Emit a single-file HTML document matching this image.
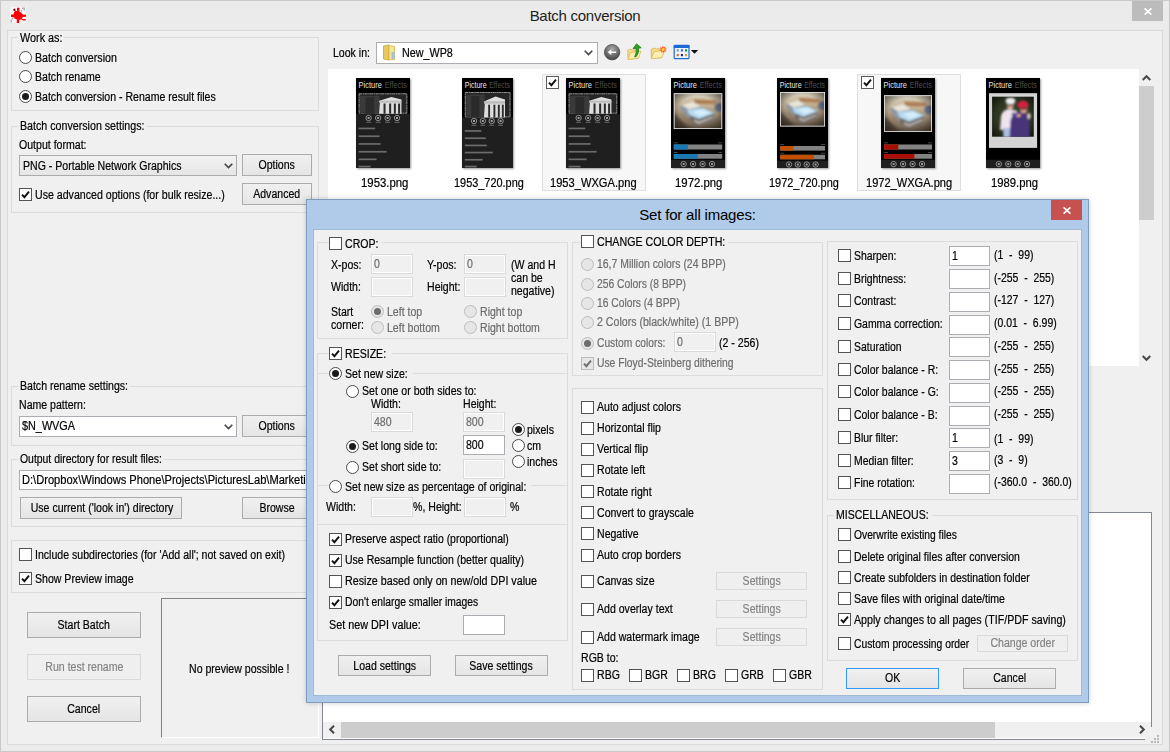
<!DOCTYPE html><html><head><meta charset="utf-8"><title>Batch conversion</title><style>
*{box-sizing:border-box;margin:0;padding:0}
html,body{width:1170px;height:752px;overflow:hidden;background:#ebebeb}
body{font-family:"Liberation Sans",sans-serif;font-size:11px;color:#000;position:relative}
.a{position:absolute}
.t{position:absolute;white-space:nowrap;line-height:13px;height:13px;font-size:12px;transform-origin:0 0;-webkit-text-stroke:0.2px currentColor}
.g{color:#6d6d6d}
.gb{position:absolute;border:1px solid #dcdcdc}
.lg{position:absolute;background:#f0f0f0;height:13px}

.cb{position:absolute;width:13px;height:13px;border:1px solid #545454;background:#fff}
.cb.d{border-color:#bcbcbc;background:#e6e6e6}

.rb{position:absolute;width:13px;height:13px;border:1px solid #4a4a4a;background:#fff;border-radius:50%}
.rb.d{border-color:#bcbcbc;background:#e6e6e6}
.rb.s::after{content:"";position:absolute;left:2px;top:2px;width:7px;height:7px;border-radius:50%;background:#1a1a1a}
.rb.d.s::after{background:#6d6d6d}
.btn{position:absolute;border:1px solid #acacac;background:linear-gradient(#f0f0f0,#e5e5e5);text-align:center;font-size:12px;white-space:nowrap}
.btn span{display:inline-block;transform:scaleX(0.88);-webkit-text-stroke:0.2px currentColor}
.btn.d{border-color:#d9d9d9;background:#efefef;color:#838383}
.btn.def{border-color:#3399ff}
.inp{position:absolute;border:1px solid #abadb3;background:#fff}
.inp.d{border:1px solid #dadada;background:#f0f0f0;box-shadow:inset 0 0 0 1px #fff}
.chk{position:absolute;left:1px;top:1px;width:9px;height:9px}
</style></head><body>
<div class="a" style="left:0;top:0;width:1170px;height:752px;border:1px solid #c9c9c9;background:#ebebeb"></div>
<div class="a" style="left:7px;top:30px;width:1156px;height:715px;border:1px solid #dadada;background:#f0f0f0"></div>
<div class="a" style="left:0;top:6px;width:1170px;text-align:center;font-size:15px;line-height:20px;color:#1e1e1e;letter-spacing:-0.27px">Batch conversion</div>
<div class="a" style="left:1132px;top:1px;width:31px;height:20px;background:#bcbcbc"></div>
<svg class="a" style="left:1144px;top:8px" width="8" height="7" viewBox="0 0 8 7"><path d="M0.6 0.3 L7.4 6.7 M7.4 0.3 L0.6 6.7" stroke="#fff" stroke-width="1.6" fill="none"/></svg>
<svg class="a" style="left:10px;top:7px" width="16" height="16" viewBox="0 0 16 16"><rect width="16" height="16" fill="#f6f6f6"/><path d="M12 0.5h3v3h-1.5v-1.5h-1.5zM0.5 12.5h1.5v3h-1.5zM11 3h1v2h-1zM2 10.5h3v1h-2v1h-1z" fill="#b5b5b5"/><path d="M7 0.8 L9.5 0.8 L9.3 4.4 L11.2 5.6 L12.6 7.6 L16 7.8 L16 9.7 L12.6 10 L12 12 L15.9 12.1 L15.6 13.6 L13 13.6 L11.6 12.4 L9.2 12.8 L9.2 16 L6.7 16 L6.9 12.6 L4.6 11.4 L4 10 L1 10 L1 7.6 L3.6 7.4 L4 5.2 L5 4.6 L3.2 3 L4.2 1.4 L5.4 2.6 L5.6 4.3 L7 4 Z" fill="#fb0007"/><path d="M3.2 3 L4.2 1.4 L5.3 2.6 L5.2 4.4 Z" fill="#7a0008"/></svg>
<div class="gb" style="left:11px;top:37px;width:308px;height:74px"></div>
<div class="lg" style="left:18px;top:31px;width:46px"></div>
<div class="t " style="left:20px;top:32px;transform:scaleX(0.9019);">Work as:</div>
<div class="rb" style="left:19px;top:51px"></div>
<div class="t " style="left:35px;top:52px;transform:scaleX(0.8896);">Batch conversion</div>
<div class="rb" style="left:19px;top:70px"></div>
<div class="t " style="left:35px;top:71px;transform:scaleX(0.88);">Batch rename</div>
<div class="rb s" style="left:19px;top:90px"></div>
<div class="t " style="left:35px;top:91px;transform:scaleX(0.88);">Batch conversion - Rename result files</div>
<div class="gb" style="left:11px;top:126px;width:308px;height:87px"></div>
<div class="lg" style="left:18px;top:119px;width:129px"></div>
<div class="t " style="left:20px;top:120px;transform:scaleX(0.8888);">Batch conversion settings:</div>
<div class="t " style="left:19px;top:139px;transform:scaleX(0.88);">Output format:</div>
<div class="inp" style="left:19px;top:155px;width:218px;height:21px;border-color:#acacac;background:linear-gradient(#f2f2f2,#e6e6e6)"></div>
<div class="t " style="left:23px;top:160px;transform:scaleX(0.88);">PNG - Portable Network Graphics</div>
<svg class="a" style="left:224px;top:163px" width="9" height="6" viewBox="0 0 9 6"><path d="M0.7 0.7 L4.5 4.5 L8.3 0.7" fill="none" stroke="#444" stroke-width="1.6"/></svg>
<div class="btn " style="left:242px;top:154px;width:70px;height:22px;line-height:20px;"><span>Options</span></div>
<div class="cb" style="left:19px;top:188px"><svg class="chk" viewBox="0 0 9 9"><path d="M1 4.6 L3.4 7.2 L8 1.6" fill="none" stroke="#111" stroke-width="1.9"/></svg></div>
<div class="t " style="left:35px;top:189px;transform:scaleX(0.8837);">Use advanced options (for bulk resize...)</div>
<div class="btn " style="left:242px;top:183px;width:70px;height:22px;line-height:20px;"><span>Advanced</span></div>
<div class="gb" style="left:11px;top:386px;width:308px;height:60px"></div>
<div class="lg" style="left:18px;top:379px;width:112px"></div>
<div class="t " style="left:20px;top:380px;transform:scaleX(0.88);">Batch rename settings:</div>
<div class="t " style="left:19px;top:399px;transform:scaleX(0.88);">Name pattern:</div>
<div class="inp" style="left:19px;top:416px;width:218px;height:21px;border-color:#abadb3;background:#fff"></div>
<div class="t " style="left:22px;top:420px;transform:scaleX(0.9031);">$N_WVGA</div>
<svg class="a" style="left:224px;top:424px" width="9" height="6" viewBox="0 0 9 6"><path d="M0.7 0.7 L4.5 4.5 L8.3 0.7" fill="none" stroke="#444" stroke-width="1.6"/></svg>
<div class="btn " style="left:242px;top:415px;width:70px;height:22px;line-height:20px;"><span>Options</span></div>
<div class="gb" style="left:11px;top:459px;width:308px;height:68px"></div>
<div class="lg" style="left:18px;top:452px;width:145px"></div>
<div class="t " style="left:20px;top:453px;transform:scaleX(0.8678);">Output directory for result files:</div>
<div class="inp" style="left:19px;top:470px;width:294px;height:20px"></div>
<div class="t " style="left:22px;top:474px;transform:scaleX(0.925);">D:\Dropbox\Windows Phone\Projects\PicturesLab\Marketing</div>
<div class="btn " style="left:20px;top:497px;width:162px;height:22px;line-height:20px;"><span>Use current ('look in') directory</span></div>
<div class="btn " style="left:242px;top:497px;width:70px;height:22px;line-height:20px;"><span>Browse</span></div>
<div class="gb" style="left:11px;top:540px;width:308px;height:53px"></div>
<div class="cb" style="left:19px;top:548px"></div>
<div class="t " style="left:35px;top:549px;transform:scaleX(0.88);">Include subdirectories (for 'Add all'; not saved on exit)</div>
<div class="cb" style="left:19px;top:572px"><svg class="chk" viewBox="0 0 9 9"><path d="M1 4.6 L3.4 7.2 L8 1.6" fill="none" stroke="#111" stroke-width="1.9"/></svg></div>
<div class="t " style="left:35px;top:573px;transform:scaleX(0.88);">Show Preview image</div>
<div class="btn " style="left:27px;top:612px;width:114px;height:26px;line-height:24px;"><span>Start Batch</span></div>
<div class="btn d" style="left:27px;top:654px;width:114px;height:26px;line-height:24px;"><span>Run test rename</span></div>
<div class="btn " style="left:27px;top:696px;width:114px;height:26px;line-height:24px;"><span>Cancel</span></div>
<div class="a" style="left:161px;top:598px;width:158px;height:140px;border:1px solid #828282;border-right-color:#fff;border-bottom-color:#fff;background:#f0f0f0"></div>
<div class="t " style="left:189px;top:663px;transform:scaleX(0.88);">No preview possible !</div>
<div class="t " style="left:333px;top:47px;transform:scaleX(0.88);">Look in:</div>
<div class="inp" style="left:376px;top:42px;width:222px;height:22px;border-color:#abadb3;background:#fff"></div>
<div class="t " style="left:402px;top:47px;transform:scaleX(0.8961);">New_WP8</div>
<svg class="a" style="left:584px;top:50px" width="9" height="6" viewBox="0 0 9 6"><path d="M0.7 0.7 L4.5 4.5 L8.3 0.7" fill="none" stroke="#444" stroke-width="1.6"/></svg>
<svg class="a" style="left:382px;top:44px" width="16" height="17" viewBox="0 0 16 17"><path d="M1.5 2 L7 1 L7 16 L1.5 15 Z" fill="#e8c860" stroke="#c9a230" stroke-width="0.8"/><path d="M7 1.5 L12.5 2.5 L12.5 15.5 L7 16 Z" fill="#f7e59a" stroke="#d4b24a" stroke-width="0.8"/><rect x="9.5" y="8" width="3" height="7" fill="#9ec3e6"/></svg>
<svg class="a" style="left:603px;top:44px" width="18" height="17" viewBox="0 0 18 17"><defs><radialGradient id="bk" cx="50%" cy="30%" r="75%"><stop offset="0" stop-color="#a9a9a9"/><stop offset="0.55" stop-color="#6f6f6f"/><stop offset="1" stop-color="#3c3c3c"/></radialGradient></defs><circle cx="9.1" cy="8.2" r="7.7" fill="url(#bk)" stroke="#4d4d4d" stroke-width="0.8"/><path d="M4.7 8.2 L8.3 5.3 L8.3 7.4 L13.2 7.4 L13.2 9 L8.3 9 L8.3 11.1 Z" fill="#fff"/></svg>
<svg class="a" style="left:626px;top:43px" width="17" height="18" viewBox="0 0 17 18"><path d="M2 16.4 L1.8 7.2 L4.5 6 L6.5 7 L12 6.6 L12.2 15.2 Z" fill="#f3dc8c" stroke="#d8b24a" stroke-width="0.8"/><path d="M2 16.5 L4.4 9.6 L15 8.2 L12.4 15.2 Z" fill="#fbeeb4" stroke="#dcb957" stroke-width="0.8"/><path d="M8.6 13.8 Q10.8 10 10.2 5.4 L7 5.6 L10.6 0.8 L15.2 4.8 L12.6 5.2 Q13.2 10.4 9.8 14 Z" fill="#2fa127" stroke="#14780f" stroke-width="0.7"/></svg>
<svg class="a" style="left:650px;top:43px" width="18" height="18" viewBox="0 0 18 18"><path d="M1.4 15.6 L1.2 6.4 L4 5 L6 6 L11.5 5.6 L11.8 14.6 Z" fill="#f3dc8c" stroke="#d8b24a" stroke-width="0.8"/><path d="M1.4 15.8 L3.8 8.6 L14.6 7.4 L12 14.6 Z" fill="#fbeeb4" stroke="#dcb957" stroke-width="0.8"/><path d="M12.9 2.4 L13.7 4.6 L15.6 3.3 L15 5.5 L17.2 5.8 L15.3 7 L16.6 8.8 L14.4 8.3 L14 10.5 L12.8 8.6 L11 9.9 L11.4 7.7 L9.2 7.4 L11 6.1 L9.8 4.2 L12 4.8 Z" fill="#ff5a1e"/><circle cx="13.1" cy="6.5" r="1.5" fill="#ffd94a"/></svg>
<svg class="a" style="left:673px;top:44px" width="26" height="17" viewBox="0 0 26 17"><rect x="1.2" y="1.4" width="14.8" height="13.2" rx="0.8" fill="#eef3fa" stroke="#1c6ad6" stroke-width="1.2"/><rect x="0.8" y="1" width="15.6" height="3" fill="#1c6ad6"/><rect x="3.7" y="5.3" width="2.1" height="2.2" fill="#8a86c6"/><rect x="7.9" y="5.3" width="2.1" height="2.2" fill="#1f72d6"/><rect x="12" y="5.3" width="2.1" height="2.2" fill="#1e8a2e"/><rect x="3.7" y="10" width="2.1" height="2.2" fill="#e8603a"/><rect x="7.9" y="10" width="2.1" height="2.2" fill="#1a2a8a"/><rect x="12" y="10" width="2.1" height="2.2" fill="#d9a030"/><path d="M17.9 5.9 L25.2 5.9 L21.55 9.8 Z" fill="#111"/></svg>
<div class="a" style="left:328px;top:69px;width:811px;height:297px;background:#fff"></div>
<div class="a" style="left:1139px;top:69px;width:17px;height:297px;background:#f0f0f0"></div>
<div class="a" style="left:1139px;top:86px;width:15px;height:134px;background:#cdcdcd"></div>
<svg class="a" style="left:1142px;top:75px" width="9" height="6" viewBox="0 0 9 6"><path d="M0.7 5 L4.5 1.2 L8.3 5" fill="none" stroke="#4a4a4a" stroke-width="2.1"/></svg>
<svg class="a" style="left:1142px;top:355px" width="9" height="6" viewBox="0 0 9 6"><path d="M0.7 1 L4.5 4.8 L8.3 1" fill="none" stroke="#4a4a4a" stroke-width="2.1"/></svg>
<svg class="a" style="left:356px;top:78px;box-shadow:1px 1px 2px rgba(0,0,0,.4);font-family:'Liberation Sans',sans-serif" width="54" height="90" viewBox="0 0 54 90"><rect width="54" height="90" fill="#000"/><text x="2.6" y="9.8" font-size="9" fill="#e9e9e9" textLength="23.2" lengthAdjust="spacingAndGlyphs">Picture</text><text x="28.8" y="9.8" font-size="9" fill="#4e4e4e" textLength="22" lengthAdjust="spacingAndGlyphs">Effects</text><rect x="0" y="36" width="54" height="54" fill="#1f1f1f"/><rect x="2.6" y="15.3" width="48.7" height="20.4" fill="#262626"/><rect x="3.1" y="15.8" width="47.7" height="19.4" fill="none" stroke="#9d9d9d" stroke-width="0.9" stroke-dasharray="3 0.6 1.5 0.4"/><rect x="4.1" y="17.8" width="19.480000000000004" height="17.9" fill="#3a3a3a"/><rect x="9.418000000000001" y="19.3" width="8.766" height="16.4" fill="#2a2a2a"/><path d="M23.054000000000002 35.7 L24.054000000000002 22.439999999999998 L35.3751 18.972 L45.456 21.42 L45.456 35.7 Z" fill="#dedede"/><rect x="27.5344" y="25.5" width="2.01618" height="10.2" fill="#2b2b2b"/><rect x="33.1349" y="25.5" width="2.01618" height="10.2" fill="#2b2b2b"/><rect x="37.83932" y="25.5" width="2.01618" height="10.2" fill="#2b2b2b"/><rect x="42.0957" y="25.5" width="2.01618" height="10.2" fill="#2b2b2b"/><rect x="23.054000000000002" y="22.644" width="22.402" height="2.04" fill="#bdbdbd"/><circle cx="12.6" cy="40" r="2.7" fill="none" stroke="#b9b9b9" stroke-width="0.7"/><rect x="11.6" y="39" width="2" height="2" fill="#9d9d9d"/><circle cx="22.1" cy="40" r="2.7" fill="none" stroke="#b9b9b9" stroke-width="0.7"/><rect x="21.1" y="39" width="2" height="2" fill="#9d9d9d"/><circle cx="31.6" cy="40" r="2.7" fill="none" stroke="#b9b9b9" stroke-width="0.7"/><rect x="30.6" y="39" width="2" height="2" fill="#9d9d9d"/><circle cx="41" cy="40" r="2.7" fill="none" stroke="#b9b9b9" stroke-width="0.7"/><rect x="40" y="39" width="2" height="2" fill="#9d9d9d"/><rect x="10.1" y="43.8" width="5" height="0.8" fill="#7d7d7d"/><rect x="19.6" y="43.8" width="5" height="0.8" fill="#7d7d7d"/><rect x="29.1" y="43.8" width="5" height="0.8" fill="#7d7d7d"/><rect x="38.5" y="43.8" width="5" height="0.8" fill="#7d7d7d"/><rect x="2.6" y="49.6" width="16.6" height="1.7" fill="#6c6c6c"/><rect x="2.6" y="57.4" width="21" height="1.7" fill="#6c6c6c"/><rect x="2.6" y="65.1" width="22" height="1.7" fill="#6c6c6c"/><rect x="2.6" y="72.89999999999999" width="28" height="1.7" fill="#6c6c6c"/><rect x="2.6" y="80.5" width="18" height="1.7" fill="#6c6c6c"/><rect x="2.6" y="87.69999999999999" width="12" height="1.7" fill="#6c6c6c"/></svg>
<div class="t " style="left:360.6px;top:177px;transform:scaleX(0.9468);-webkit-text-stroke:0.2px #000;">1953.png</div>
<svg class="a" style="left:462px;top:78px;box-shadow:1px 1px 2px rgba(0,0,0,.4);font-family:'Liberation Sans',sans-serif" width="51" height="90" viewBox="0 0 51 90"><rect width="51" height="90" fill="#000"/><text x="2.8" y="9.8" font-size="9" fill="#e9e9e9" textLength="21.8" lengthAdjust="spacingAndGlyphs">Picture</text><text x="27.2" y="9.8" font-size="9" fill="#4e4e4e" textLength="20.8" lengthAdjust="spacingAndGlyphs">Effects</text><rect x="0" y="39.5" width="51" height="50.5" fill="#1f1f1f"/><rect x="2.8" y="14" width="45.7" height="25.4" fill="#262626"/><rect x="3.3" y="14.5" width="44.7" height="24.4" fill="none" stroke="#9d9d9d" stroke-width="0.9" stroke-dasharray="3 0.6 1.5 0.4"/><rect x="4.3" y="16.5" width="18.28" height="22.9" fill="#3a3a3a"/><rect x="9.198" y="18" width="8.226" height="21.4" fill="#2a2a2a"/><path d="M21.994 39.4 L22.994 22.89 L33.5561 18.572 L43.016000000000005 21.619999999999997 L43.016000000000005 39.4 Z" fill="#dedede"/><rect x="26.1984" y="26.7" width="1.8919800000000002" height="12.7" fill="#2b2b2b"/><rect x="31.4539" y="26.7" width="1.8919800000000002" height="12.7" fill="#2b2b2b"/><rect x="35.868520000000004" y="26.7" width="1.8919800000000002" height="12.7" fill="#2b2b2b"/><rect x="39.862700000000004" y="26.7" width="1.8919800000000002" height="12.7" fill="#2b2b2b"/><rect x="21.994" y="23.144" width="21.022000000000002" height="2.54" fill="#bdbdbd"/><circle cx="12" cy="43" r="2.7" fill="none" stroke="#b9b9b9" stroke-width="0.7"/><rect x="11" y="42" width="2" height="2" fill="#9d9d9d"/><circle cx="20.8" cy="43" r="2.7" fill="none" stroke="#b9b9b9" stroke-width="0.7"/><rect x="19.8" y="42" width="2" height="2" fill="#9d9d9d"/><circle cx="29.7" cy="43" r="2.7" fill="none" stroke="#b9b9b9" stroke-width="0.7"/><rect x="28.7" y="42" width="2" height="2" fill="#9d9d9d"/><circle cx="38.6" cy="43" r="2.7" fill="none" stroke="#b9b9b9" stroke-width="0.7"/><rect x="37.6" y="42" width="2" height="2" fill="#9d9d9d"/><rect x="9.5" y="46.8" width="5" height="0.8" fill="#7d7d7d"/><rect x="18.3" y="46.8" width="5" height="0.8" fill="#7d7d7d"/><rect x="27.2" y="46.8" width="5" height="0.8" fill="#7d7d7d"/><rect x="36.1" y="46.8" width="5" height="0.8" fill="#7d7d7d"/><rect x="2.8" y="52.1" width="16.6" height="1.7" fill="#6c6c6c"/><rect x="2.8" y="59.4" width="21" height="1.7" fill="#6c6c6c"/><rect x="2.8" y="66.6" width="22" height="1.7" fill="#6c6c6c"/><rect x="2.8" y="73.69999999999999" width="28" height="1.7" fill="#6c6c6c"/><rect x="2.8" y="80.89999999999999" width="18" height="1.7" fill="#6c6c6c"/><rect x="2.8" y="87.69999999999999" width="12" height="1.7" fill="#6c6c6c"/></svg>
<div class="t " style="left:453.5px;top:177px;transform:scaleX(0.9094);-webkit-text-stroke:0.2px #000;">1953_720.png</div>
<div class="a" style="left:542px;top:74px;width:104px;height:117px;border:1px solid #dedede;background:#f7f7f7"></div>
<div class="cb" style="left:546px;top:76px;border-color:#5a5a5a"><svg class="chk" viewBox="0 0 9 9"><path d="M1 4.6 L3.4 7.2 L8 1.6" fill="none" stroke="#111" stroke-width="1.9"/></svg></div>
<svg class="a" style="left:566px;top:78px;box-shadow:1px 1px 2px rgba(0,0,0,.4);font-family:'Liberation Sans',sans-serif" width="54" height="90" viewBox="0 0 54 90"><rect width="54" height="90" fill="#000"/><text x="2.6" y="9.8" font-size="9" fill="#e9e9e9" textLength="23.2" lengthAdjust="spacingAndGlyphs">Picture</text><text x="28.8" y="9.8" font-size="9" fill="#4e4e4e" textLength="22" lengthAdjust="spacingAndGlyphs">Effects</text><rect x="0" y="36" width="54" height="54" fill="#1f1f1f"/><rect x="2.6" y="15.3" width="48.7" height="20.4" fill="#262626"/><rect x="3.1" y="15.8" width="47.7" height="19.4" fill="none" stroke="#9d9d9d" stroke-width="0.9" stroke-dasharray="3 0.6 1.5 0.4"/><rect x="4.1" y="17.8" width="19.480000000000004" height="17.9" fill="#3a3a3a"/><rect x="9.418000000000001" y="19.3" width="8.766" height="16.4" fill="#2a2a2a"/><path d="M23.054000000000002 35.7 L24.054000000000002 22.439999999999998 L35.3751 18.972 L45.456 21.42 L45.456 35.7 Z" fill="#dedede"/><rect x="27.5344" y="25.5" width="2.01618" height="10.2" fill="#2b2b2b"/><rect x="33.1349" y="25.5" width="2.01618" height="10.2" fill="#2b2b2b"/><rect x="37.83932" y="25.5" width="2.01618" height="10.2" fill="#2b2b2b"/><rect x="42.0957" y="25.5" width="2.01618" height="10.2" fill="#2b2b2b"/><rect x="23.054000000000002" y="22.644" width="22.402" height="2.04" fill="#bdbdbd"/><circle cx="12.6" cy="40" r="2.7" fill="none" stroke="#b9b9b9" stroke-width="0.7"/><rect x="11.6" y="39" width="2" height="2" fill="#9d9d9d"/><circle cx="22.1" cy="40" r="2.7" fill="none" stroke="#b9b9b9" stroke-width="0.7"/><rect x="21.1" y="39" width="2" height="2" fill="#9d9d9d"/><circle cx="31.6" cy="40" r="2.7" fill="none" stroke="#b9b9b9" stroke-width="0.7"/><rect x="30.6" y="39" width="2" height="2" fill="#9d9d9d"/><circle cx="41" cy="40" r="2.7" fill="none" stroke="#b9b9b9" stroke-width="0.7"/><rect x="40" y="39" width="2" height="2" fill="#9d9d9d"/><rect x="10.1" y="43.8" width="5" height="0.8" fill="#7d7d7d"/><rect x="19.6" y="43.8" width="5" height="0.8" fill="#7d7d7d"/><rect x="29.1" y="43.8" width="5" height="0.8" fill="#7d7d7d"/><rect x="38.5" y="43.8" width="5" height="0.8" fill="#7d7d7d"/><rect x="2.6" y="49.6" width="16.6" height="1.7" fill="#6c6c6c"/><rect x="2.6" y="57.4" width="21" height="1.7" fill="#6c6c6c"/><rect x="2.6" y="65.1" width="22" height="1.7" fill="#6c6c6c"/><rect x="2.6" y="72.89999999999999" width="28" height="1.7" fill="#6c6c6c"/><rect x="2.6" y="80.5" width="18" height="1.7" fill="#6c6c6c"/><rect x="2.6" y="87.69999999999999" width="12" height="1.7" fill="#6c6c6c"/></svg>
<div class="t " style="left:550.3px;top:177px;transform:scaleX(0.9271);-webkit-text-stroke:0.2px #000;">1953_WXGA.png</div>
<svg class="a" style="left:671px;top:78px;box-shadow:1px 1px 2px rgba(0,0,0,.4);font-family:'Liberation Sans',sans-serif" width="54" height="90" viewBox="0 0 54 90"><rect width="54" height="90" fill="#000"/><text x="2.6" y="9.8" font-size="9" fill="#e9e9e9" textLength="23.2" lengthAdjust="spacingAndGlyphs">Picture</text><text x="28.8" y="9.8" font-size="9" fill="#4e4e4e" textLength="22" lengthAdjust="spacingAndGlyphs">Effects</text><defs><linearGradient id="cgblue" x1="0" y1="0" x2="0" y2="1"><stop offset="0" stop-color="#d9d3c0"/><stop offset="0.35" stop-color="#c4b295"/><stop offset="0.6" stop-color="#9a8770"/><stop offset="1" stop-color="#6f5f4d"/></linearGradient><radialGradient id="vcgblue" cx="50%" cy="48%" r="72%"><stop offset="0.55" stop-color="#000" stop-opacity="0"/><stop offset="1" stop-color="#1a120a" stop-opacity="0.75"/></radialGradient><filter id="blblue" x="-10%" y="-10%" width="120%" height="120%"><feGaussianBlur stdDeviation="1.1"/></filter><clipPath id="cpblue"><rect x="2.8" y="15.3" width="48.4" height="35.7"/></clipPath></defs><rect x="2.8" y="15.3" width="48.4" height="35.7" fill="url(#cgblue)"/><g clip-path="url(#cpblue)"><g filter="url(#blblue)"><path d="M23.13 21.37 L45.39 22.44 L45.39 26.37 L23.13 25.65 Z" fill="#a2693a" opacity="0.75"/><path d="M0.38 33.15 L20.22 52.79 L0.38 52.79 Z" fill="#54483c" opacity="0.8"/><ellipse cx="48.29599999999999" cy="29.580000000000002" rx="4.84" ry="4.641000000000001" fill="#55637a" opacity="0.9"/><path d="M7.64 28.51 L22.16 24.94 L30.87 29.58 L43.94 34.58 L42.00 42.08 L25.55 47.43 L16.35 38.86 Z" fill="#8b95a1"/><path d="M10.54 27.08 L22.16 23.87 L29.90 28.87 L17.32 31.37 Z" fill="#e9e5d9"/><path d="M15.87 32.08 L31.84 29.94 L43.46 34.94 L27.97 40.65 L18.77 36.72 Z" fill="#b6dcf2"/><path d="M22.16 33.15 L31.84 31.72 L39.58 34.94 L28.94 38.15 Z" fill="#d6eefb"/><path d="M18.77 37.43 L27.97 41.36 L42.97 35.65 L42.00 42.79 L25.55 48.14 L18.77 41.72 Z" fill="#6f6966"/><path d="M23.13 41.72 L27.97 43.86 L41.52 38.51 L41.52 39.93 L27.97 45.65 L23.13 43.50 Z" fill="#c9c2ba"/></g></g><rect x="2.8" y="15.3" width="48.4" height="35.7" fill="url(#vcgblue)"/><rect x="3.1999999999999997" y="15.700000000000001" width="47.6" height="34.900000000000006" fill="none" stroke="#efefef" stroke-width="0.8"/><rect x="2.8" y="66.5" width="48.4" height="5" fill="#828282"/><rect x="2.8" y="66.5" width="14" height="5" fill="#1a79b4"/><rect x="2.8" y="76" width="48.4" height="4.7" fill="#828282"/><rect x="2.8" y="76" width="24" height="4.7" fill="#1a79b4"/><rect x="2.8" y="64.5" width="4" height="0.8" fill="#555"/><rect x="47.199999999999996" y="64.5" width="4" height="0.8" fill="#555"/><rect x="2.8" y="74" width="4" height="0.8" fill="#555"/><rect x="47.199999999999996" y="74" width="4" height="0.8" fill="#555"/><rect x="0" y="81.8" width="54" height="8.200000000000003" fill="#1f1f1f"/><circle cx="12.6" cy="86.10000000000001" r="2.7" fill="none" stroke="#b9b9b9" stroke-width="0.7"/><rect x="11.6" y="85.10000000000001" width="2" height="2" fill="#9d9d9d"/><circle cx="22.1" cy="86.10000000000001" r="2.7" fill="none" stroke="#b9b9b9" stroke-width="0.7"/><rect x="21.1" y="85.10000000000001" width="2" height="2" fill="#9d9d9d"/><circle cx="31.6" cy="86.10000000000001" r="2.7" fill="none" stroke="#b9b9b9" stroke-width="0.7"/><rect x="30.6" y="85.10000000000001" width="2" height="2" fill="#9d9d9d"/><circle cx="41" cy="86.10000000000001" r="2.7" fill="none" stroke="#b9b9b9" stroke-width="0.7"/><rect x="40" y="85.10000000000001" width="2" height="2" fill="#9d9d9d"/></svg>
<div class="t " style="left:675.4px;top:177px;transform:scaleX(0.9468);-webkit-text-stroke:0.2px #000;">1972.png</div>
<svg class="a" style="left:777px;top:78px;box-shadow:1px 1px 2px rgba(0,0,0,.4);font-family:'Liberation Sans',sans-serif" width="51" height="90" viewBox="0 0 51 90"><rect width="51" height="90" fill="#000"/><text x="2.8" y="9.8" font-size="9" fill="#e9e9e9" textLength="21.8" lengthAdjust="spacingAndGlyphs">Picture</text><text x="27.2" y="9.8" font-size="9" fill="#4e4e4e" textLength="20.8" lengthAdjust="spacingAndGlyphs">Effects</text><defs><linearGradient id="cgorange" x1="0" y1="0" x2="0" y2="1"><stop offset="0" stop-color="#d9d3c0"/><stop offset="0.35" stop-color="#c4b295"/><stop offset="0.6" stop-color="#9a8770"/><stop offset="1" stop-color="#6f5f4d"/></linearGradient><radialGradient id="vcgorange" cx="50%" cy="48%" r="72%"><stop offset="0.55" stop-color="#000" stop-opacity="0"/><stop offset="1" stop-color="#1a120a" stop-opacity="0.75"/></radialGradient><filter id="blorange" x="-10%" y="-10%" width="120%" height="120%"><feGaussianBlur stdDeviation="1.1"/></filter><clipPath id="cporange"><rect x="3.2" y="14" width="44.8" height="34.5"/></clipPath></defs><rect x="3.2" y="14" width="44.8" height="34.5" fill="url(#cgorange)"/><g clip-path="url(#cporange)"><g filter="url(#blorange)"><path d="M22.02 19.87 L42.62 20.90 L42.62 24.70 L22.02 24.00 Z" fill="#a2693a" opacity="0.75"/><path d="M0.96 31.25 L19.33 50.23 L0.96 50.23 Z" fill="#54483c" opacity="0.8"/><ellipse cx="45.312" cy="27.8" rx="4.4799999999999995" ry="4.485" fill="#55637a" opacity="0.9"/><path d="M7.68 26.77 L21.12 23.32 L29.18 27.80 L41.28 32.63 L39.49 39.88 L24.26 45.05 L15.74 36.77 Z" fill="#8b95a1"/><path d="M10.37 25.38 L21.12 22.28 L28.29 27.11 L16.64 29.52 Z" fill="#e9e5d9"/><path d="M15.30 30.21 L30.08 28.14 L40.83 32.98 L26.50 38.49 L17.98 34.70 Z" fill="#b6dcf2"/><path d="M21.12 31.25 L30.08 29.87 L37.25 32.98 L27.39 36.08 Z" fill="#d6eefb"/><path d="M17.98 35.39 L26.50 39.19 L40.38 33.66 L39.49 40.56 L24.26 45.74 L17.98 39.53 Z" fill="#6f6966"/><path d="M22.02 39.53 L26.50 41.60 L39.04 36.42 L39.04 37.80 L26.50 43.33 L22.02 41.26 Z" fill="#c9c2ba"/></g></g><rect x="3.2" y="14" width="44.8" height="34.5" fill="url(#vcgorange)"/><rect x="3.6" y="14.4" width="44.0" height="33.7" fill="none" stroke="#efefef" stroke-width="0.8"/><rect x="3.2" y="68" width="44.8" height="4.6" fill="#828282"/><rect x="3.2" y="68" width="13.3" height="4.6" fill="#c25000"/><rect x="3.2" y="76.8" width="44.8" height="4.5" fill="#828282"/><rect x="3.2" y="76.8" width="33.7" height="4.5" fill="#c25000"/><rect x="3.2" y="66" width="4" height="0.8" fill="#555"/><rect x="44.0" y="66" width="4" height="0.8" fill="#555"/><rect x="3.2" y="74.8" width="4" height="0.8" fill="#555"/><rect x="44.0" y="74.8" width="4" height="0.8" fill="#555"/><rect x="0" y="82.6" width="51" height="7.400000000000006" fill="#1f1f1f"/><circle cx="12" cy="86.5" r="2.7" fill="none" stroke="#b9b9b9" stroke-width="0.7"/><rect x="11" y="85.5" width="2" height="2" fill="#9d9d9d"/><circle cx="20.8" cy="86.5" r="2.7" fill="none" stroke="#b9b9b9" stroke-width="0.7"/><rect x="19.8" y="85.5" width="2" height="2" fill="#9d9d9d"/><circle cx="29.7" cy="86.5" r="2.7" fill="none" stroke="#b9b9b9" stroke-width="0.7"/><rect x="28.7" y="85.5" width="2" height="2" fill="#9d9d9d"/><circle cx="38.6" cy="86.5" r="2.7" fill="none" stroke="#b9b9b9" stroke-width="0.7"/><rect x="37.6" y="85.5" width="2" height="2" fill="#9d9d9d"/></svg>
<div class="t " style="left:768.7px;top:177px;transform:scaleX(0.9094);-webkit-text-stroke:0.2px #000;">1972_720.png</div>
<div class="a" style="left:857px;top:74px;width:104px;height:117px;border:1px solid #dedede;background:#f7f7f7"></div>
<div class="cb" style="left:861px;top:76px;border-color:#5a5a5a"><svg class="chk" viewBox="0 0 9 9"><path d="M1 4.6 L3.4 7.2 L8 1.6" fill="none" stroke="#111" stroke-width="1.9"/></svg></div>
<svg class="a" style="left:881px;top:78px;box-shadow:1px 1px 2px rgba(0,0,0,.4);font-family:'Liberation Sans',sans-serif" width="54" height="90" viewBox="0 0 54 90"><rect width="54" height="90" fill="#000"/><text x="2.6" y="9.8" font-size="9" fill="#e9e9e9" textLength="23.2" lengthAdjust="spacingAndGlyphs">Picture</text><text x="28.8" y="9.8" font-size="9" fill="#4e4e4e" textLength="22" lengthAdjust="spacingAndGlyphs">Effects</text><defs><linearGradient id="cgred" x1="0" y1="0" x2="0" y2="1"><stop offset="0" stop-color="#d9d3c0"/><stop offset="0.35" stop-color="#c4b295"/><stop offset="0.6" stop-color="#9a8770"/><stop offset="1" stop-color="#6f5f4d"/></linearGradient><radialGradient id="vcgred" cx="50%" cy="48%" r="72%"><stop offset="0.55" stop-color="#000" stop-opacity="0"/><stop offset="1" stop-color="#1a120a" stop-opacity="0.75"/></radialGradient><filter id="blred" x="-10%" y="-10%" width="120%" height="120%"><feGaussianBlur stdDeviation="1.1"/></filter><clipPath id="cpred"><rect x="3.1" y="17.3" width="47.9" height="36.5"/></clipPath></defs><rect x="3.1" y="17.3" width="47.9" height="36.5" fill="url(#cgred)"/><g clip-path="url(#cpred)"><g filter="url(#blred)"><path d="M23.22 23.51 L45.25 24.60 L45.25 28.62 L23.22 27.88 Z" fill="#a2693a" opacity="0.75"/><path d="M0.71 35.55 L20.34 55.62 L0.71 55.62 Z" fill="#54483c" opacity="0.8"/><ellipse cx="48.126" cy="31.900000000000002" rx="4.79" ry="4.745" fill="#55637a" opacity="0.9"/><path d="M7.89 30.80 L22.26 27.16 L30.88 31.90 L43.81 37.01 L41.90 44.67 L25.61 50.15 L16.51 41.39 Z" fill="#8b95a1"/><path d="M10.76 29.34 L22.26 26.06 L29.92 31.17 L17.47 33.73 Z" fill="#e9e5d9"/><path d="M16.03 34.45 L31.84 32.27 L43.34 37.38 L28.01 43.22 L18.91 39.20 Z" fill="#b6dcf2"/><path d="M22.26 35.55 L31.84 34.09 L39.50 37.38 L28.97 40.66 Z" fill="#d6eefb"/><path d="M18.91 39.93 L28.01 43.95 L42.86 38.11 L41.90 45.41 L25.61 50.88 L18.91 44.31 Z" fill="#6f6966"/><path d="M23.22 44.31 L28.01 46.50 L41.42 41.03 L41.42 42.48 L28.01 48.33 L23.22 46.14 Z" fill="#c9c2ba"/></g></g><rect x="3.1" y="17.3" width="47.9" height="36.5" fill="url(#vcgred)"/><rect x="3.5" y="17.7" width="47.1" height="35.7" fill="none" stroke="#efefef" stroke-width="0.8"/><rect x="3.1" y="66.5" width="47.9" height="5" fill="#828282"/><rect x="3.1" y="66.5" width="14.2" height="5" fill="#a90e00"/><rect x="3.1" y="76" width="47.9" height="4.7" fill="#828282"/><rect x="3.1" y="76" width="30.3" height="4.7" fill="#a90e00"/><rect x="3.1" y="64.5" width="4" height="0.8" fill="#555"/><rect x="47.0" y="64.5" width="4" height="0.8" fill="#555"/><rect x="3.1" y="74" width="4" height="0.8" fill="#555"/><rect x="47.0" y="74" width="4" height="0.8" fill="#555"/><rect x="0" y="81.8" width="54" height="8.200000000000003" fill="#1f1f1f"/><circle cx="12.6" cy="86.10000000000001" r="2.7" fill="none" stroke="#b9b9b9" stroke-width="0.7"/><rect x="11.6" y="85.10000000000001" width="2" height="2" fill="#9d9d9d"/><circle cx="22.1" cy="86.10000000000001" r="2.7" fill="none" stroke="#b9b9b9" stroke-width="0.7"/><rect x="21.1" y="85.10000000000001" width="2" height="2" fill="#9d9d9d"/><circle cx="31.6" cy="86.10000000000001" r="2.7" fill="none" stroke="#b9b9b9" stroke-width="0.7"/><rect x="30.6" y="85.10000000000001" width="2" height="2" fill="#9d9d9d"/><circle cx="41" cy="86.10000000000001" r="2.7" fill="none" stroke="#b9b9b9" stroke-width="0.7"/><rect x="40" y="85.10000000000001" width="2" height="2" fill="#9d9d9d"/></svg>
<div class="t " style="left:865.7px;top:177px;transform:scaleX(0.9218);-webkit-text-stroke:0.2px #000;">1972_WXGA.png</div>
<svg class="a" style="left:986px;top:78px;box-shadow:1px 1px 2px rgba(0,0,0,.4);font-family:'Liberation Sans',sans-serif" width="54" height="90" viewBox="0 0 54 90"><rect width="54" height="90" fill="#000"/><text x="2.6" y="9.8" font-size="9" fill="#e9e9e9" textLength="23.2" lengthAdjust="spacingAndGlyphs">Picture</text><text x="28.8" y="9.8" font-size="9" fill="#4e4e4e" textLength="22" lengthAdjust="spacingAndGlyphs">Effects</text><rect x="3" y="15.2" width="48.1" height="54.7" fill="#d4d4d4"/><defs><radialGradient id="pg" cx="50%" cy="50%" r="72%"><stop offset="0" stop-color="#3f4a2c"/><stop offset="0.6" stop-color="#2b3420"/><stop offset="1" stop-color="#0d100a"/></radialGradient><filter id="blp" x="-10%" y="-10%" width="120%" height="120%"><feGaussianBlur stdDeviation="1"/></filter><clipPath id="cpp"><rect x="6.1" y="18.7" width="41.7" height="40"/></clipPath></defs><rect x="6.1" y="18.7" width="41.7" height="40" fill="url(#pg)"/><g clip-path="url(#cpp)"><g filter="url(#blp)"><path d="M14 52 L15 38 Q17 31 24 31 L31 33 L31 51 Z" fill="#efe3ee"/><path d="M17 50 L25.5 50 L25 60 L17.5 60 Z" fill="#aebfe0"/><ellipse cx="24.3" cy="27.6" rx="3.5" ry="3.6" fill="#d7a894"/><rect x="20.8" y="25.8" width="7" height="1.8" rx="0.8" fill="#2a2320"/><ellipse cx="24.5" cy="23" rx="4.8" ry="3.3" fill="#f1edf3"/><path d="M23.5 60 L24.5 42 L27.5 35.5 Q36 31.5 43.5 38 L43.5 60 Z" fill="#47357a"/><path d="M27 34 L34 37.5 L33 40.5 L25.5 37 Z" fill="#5a4590"/><ellipse cx="32.8" cy="37.4" rx="2.2" ry="1.6" fill="#d9a58c"/><ellipse cx="37.8" cy="31.4" rx="3.6" ry="3.6" fill="#d9a28c"/><rect x="34.3" y="29.9" width="7" height="1.8" rx="0.8" fill="#2a2320"/><ellipse cx="36.9" cy="26.7" rx="5.6" ry="3.9" fill="#d3213f"/><ellipse cx="43" cy="38" rx="1.6" ry="3" fill="#e6d6c8"/></g></g><rect x="0" y="81.8" width="54" height="8.2" fill="#1f1f1f"/><circle cx="12.8" cy="86.1" r="2.7" fill="none" stroke="#b9b9b9" stroke-width="0.7"/><rect x="11.8" y="85.1" width="2" height="2" fill="#9d9d9d"/><circle cx="22.3" cy="86.1" r="2.7" fill="none" stroke="#b9b9b9" stroke-width="0.7"/><rect x="21.3" y="85.1" width="2" height="2" fill="#9d9d9d"/><circle cx="31.7" cy="86.1" r="2.7" fill="none" stroke="#b9b9b9" stroke-width="0.7"/><rect x="30.7" y="85.1" width="2" height="2" fill="#9d9d9d"/><circle cx="41" cy="86.1" r="2.7" fill="none" stroke="#b9b9b9" stroke-width="0.7"/><rect x="40" y="85.1" width="2" height="2" fill="#9d9d9d"/></svg>
<div class="t " style="left:990.7px;top:177px;transform:scaleX(0.9408);-webkit-text-stroke:0.2px #000;">1989.png</div>
<div class="a" style="left:322px;top:512px;width:830px;height:228px;border:1px solid #828790;background:#fff"></div>
<div class="a" style="left:323px;top:722px;width:828px;height:16px;background:#f0f0f0"></div><div class="a" style="left:1145px;top:727px;width:8px;height:14px;background:#f0f0f0"></div>
<div class="a" style="left:341px;top:722px;width:654px;height:16px;background:#cdcdcd"></div>
<svg class="a" style="left:329px;top:725px" width="6" height="9" viewBox="0 0 6 9"><path d="M5 0.7 L1.2 4.5 L5 8.3" fill="none" stroke="#4a4a4a" stroke-width="2.1"/></svg>
<svg class="a" style="left:1139px;top:725px" width="6" height="9" viewBox="0 0 6 9"><path d="M1 0.7 L4.8 4.5 L1 8.3" fill="none" stroke="#4a4a4a" stroke-width="2.1"/></svg>
<div class="a" style="left:1157px;top:735px;width:2px;height:2px;background:#b8b8b8"></div>
<div class="a" style="left:1154px;top:738px;width:2px;height:2px;background:#b8b8b8"></div>
<div class="a" style="left:1157px;top:738px;width:2px;height:2px;background:#b8b8b8"></div>
<div class="a" style="left:1151px;top:741px;width:2px;height:2px;background:#b8b8b8"></div>
<div class="a" style="left:1154px;top:741px;width:2px;height:2px;background:#b8b8b8"></div>
<div class="a" style="left:1157px;top:741px;width:2px;height:2px;background:#b8b8b8"></div>
<div class="a" style="left:306px;top:199px;width:783px;height:504px;background:#afcbe9;border:1px solid #7d9cc0;box-shadow:0 0 5px rgba(0,0,0,0.2)"></div>
<div class="a" style="left:313px;top:229px;width:769px;height:467px;background:#f0f0f0;border:1px solid #9fb9d6"></div>
<div class="a" style="left:306px;top:205px;width:783px;text-align:center;font-size:15px;line-height:20px;color:#000;letter-spacing:-0.19px">Set for all images:</div>
<div class="a" style="left:1051px;top:200px;width:31px;height:20px;background:#c75050"></div>
<svg class="a" style="left:1063px;top:207px" width="8" height="7" viewBox="0 0 8 7"><path d="M0.6 0.3 L7.4 6.7 M7.4 0.3 L0.6 6.7" stroke="#fff" stroke-width="1.6" fill="none"/></svg>
<div class="gb" style="left:317px;top:242px;width:251px;height:97px"></div>
<div class="lg" style="left:329px;top:237px;width:52px"></div>
<div class="cb" style="left:329px;top:237px"></div>
<div class="t " style="left:345px;top:238px;transform:scaleX(0.88);">CROP:</div>
<div class="t " style="left:331px;top:259px;transform:scaleX(0.88);">X-pos:</div>
<div class="inp d" style="left:371px;top:254px;width:42px;height:20px"></div>
<div class="t g" style="left:374px;top:258px;transform:scaleX(0.88);">0</div>
<div class="t " style="left:427px;top:259px;transform:scaleX(0.88);">Y-pos:</div>
<div class="inp d" style="left:464px;top:254px;width:42px;height:20px"></div>
<div class="t g" style="left:467px;top:258px;transform:scaleX(0.88);">0</div>
<div class="t " style="left:511px;top:259px;transform:scaleX(0.88);">(W and H</div>
<div class="t " style="left:511px;top:272px;transform:scaleX(0.88);">can be</div>
<div class="t " style="left:511px;top:285px;transform:scaleX(0.88);">negative)</div>
<div class="t " style="left:331px;top:281px;transform:scaleX(0.88);">Width:</div>
<div class="inp d" style="left:371px;top:277px;width:42px;height:20px"></div>
<div class="t " style="left:427px;top:281px;transform:scaleX(0.88);">Height:</div>
<div class="inp d" style="left:464px;top:277px;width:42px;height:20px"></div>
<div class="t " style="left:331px;top:306px;transform:scaleX(0.88);">Start</div>
<div class="t " style="left:331px;top:319px;transform:scaleX(0.88);">corner:</div>
<div class="rb d s" style="left:371px;top:305px"></div>
<div class="t g" style="left:387px;top:306px;transform:scaleX(0.88);">Left top</div>
<div class="rb d" style="left:371px;top:321px"></div>
<div class="t g" style="left:387px;top:322px;transform:scaleX(0.88);">Left bottom</div>
<div class="rb d" style="left:464px;top:305px"></div>
<div class="t g" style="left:480px;top:306px;transform:scaleX(0.88);">Right top</div>
<div class="rb d" style="left:464px;top:321px"></div>
<div class="t g" style="left:480px;top:322px;transform:scaleX(0.88);">Right bottom</div>
<div class="gb" style="left:317px;top:353px;width:251px;height:288px"></div>
<div class="lg" style="left:329px;top:347px;width:63px"></div>
<div class="cb" style="left:329px;top:347px"><svg class="chk" viewBox="0 0 9 9"><path d="M1 4.6 L3.4 7.2 L8 1.6" fill="none" stroke="#111" stroke-width="1.9"/></svg></div>
<div class="t " style="left:345px;top:348px;transform:scaleX(0.88);">RESIZE:</div>
<div class="gb" style="left:317px;top:373px;width:251px;height:113px"></div>
<div class="lg" style="left:329px;top:367px;width:84px"></div>
<div class="rb s" style="left:329px;top:367px"></div>
<div class="t " style="left:345px;top:368px;transform:scaleX(0.88);">Set new size:</div>
<div class="rb" style="left:346px;top:385px"></div>
<div class="t " style="left:362px;top:385px;transform:scaleX(0.88);">Set one or both sides to:</div>
<div class="t " style="left:371px;top:398px;transform:scaleX(0.88);">Width:</div>
<div class="t " style="left:463px;top:398px;transform:scaleX(0.88);">Height:</div>
<div class="inp d" style="left:371px;top:412px;width:42px;height:20px"></div>
<div class="t g" style="left:374px;top:416px;transform:scaleX(0.88);">480</div>
<div class="inp d" style="left:463px;top:412px;width:42px;height:20px"></div>
<div class="t g" style="left:466px;top:416px;transform:scaleX(0.88);">800</div>
<div class="rb s" style="left:346px;top:440px"></div>
<div class="t " style="left:362px;top:440px;transform:scaleX(0.88);">Set long side to:</div>
<div class="inp" style="left:463px;top:435px;width:42px;height:20px"></div>
<div class="t " style="left:466px;top:439px;transform:scaleX(0.88);">800</div>
<div class="rb" style="left:346px;top:461px"></div>
<div class="t " style="left:362px;top:461px;transform:scaleX(0.88);">Set short side to:</div>
<div class="inp d" style="left:463px;top:459px;width:42px;height:20px"></div>
<div class="rb s" style="left:512px;top:423px"></div>
<div class="t " style="left:527px;top:424px;transform:scaleX(0.88);">pixels</div>
<div class="rb" style="left:512px;top:439px"></div>
<div class="t " style="left:527px;top:440px;transform:scaleX(0.88);">cm</div>
<div class="rb" style="left:512px;top:455px"></div>
<div class="t " style="left:527px;top:456px;transform:scaleX(0.88);">inches</div>
<div class="gb" style="left:317px;top:485px;width:251px;height:40px"></div>
<div class="lg" style="left:329px;top:480px;width:202px"></div>
<div class="rb" style="left:329px;top:480px"></div>
<div class="t " style="left:345px;top:481px;transform:scaleX(0.88);">Set new size as percentage of original:</div>
<div class="t " style="left:326px;top:501px;transform:scaleX(0.88);">Width:</div>
<div class="inp d" style="left:371px;top:497px;width:42px;height:20px"></div>
<div class="t " style="left:413px;top:501px;transform:scaleX(0.88);">%, Height:</div>
<div class="inp d" style="left:464px;top:497px;width:42px;height:20px"></div>
<div class="t " style="left:510px;top:501px;transform:scaleX(0.88);">%</div>
<div class="cb" style="left:329px;top:533px"><svg class="chk" viewBox="0 0 9 9"><path d="M1 4.6 L3.4 7.2 L8 1.6" fill="none" stroke="#111" stroke-width="1.9"/></svg></div>
<div class="t " style="left:345px;top:533px;transform:scaleX(0.8708);">Preserve aspect ratio (proportional)</div>
<div class="cb" style="left:329px;top:554px"><svg class="chk" viewBox="0 0 9 9"><path d="M1 4.6 L3.4 7.2 L8 1.6" fill="none" stroke="#111" stroke-width="1.9"/></svg></div>
<div class="t " style="left:345px;top:554px;transform:scaleX(0.877);">Use Resample function (better quality)</div>
<div class="cb" style="left:329px;top:575px"></div>
<div class="t " style="left:345px;top:575px;transform:scaleX(0.8939);">Resize based only on new/old DPI value</div>
<div class="cb" style="left:329px;top:596px"><svg class="chk" viewBox="0 0 9 9"><path d="M1 4.6 L3.4 7.2 L8 1.6" fill="none" stroke="#111" stroke-width="1.9"/></svg></div>
<div class="t " style="left:345px;top:596px;transform:scaleX(0.8592);">Don't enlarge smaller images</div>
<div class="t " style="left:329px;top:619px;transform:scaleX(0.8994);">Set new DPI value:</div>
<div class="inp" style="left:463px;top:615px;width:42px;height:20px"></div>
<div class="btn " style="left:338px;top:655px;width:93px;height:21px;line-height:19px;padding-top:1px;"><span>Load settings</span></div>
<div class="btn " style="left:455px;top:655px;width:93px;height:21px;line-height:19px;padding-top:1px;"><span>Save settings</span></div>
<div class="gb" style="left:572px;top:242px;width:251px;height:134px"></div>
<div class="lg" style="left:581px;top:235px;width:147px"></div>
<div class="cb" style="left:581px;top:235px"></div>
<div class="t " style="left:597px;top:236px;transform:scaleX(0.8867);">CHANGE COLOR DEPTH:</div>
<div class="rb d" style="left:581px;top:258px"></div>
<div class="t g" style="left:597px;top:258px;transform:scaleX(0.8692);">16,7 Million colors (24 BPP)</div>
<div class="rb d" style="left:581px;top:278px"></div>
<div class="t g" style="left:597px;top:278px;transform:scaleX(0.8608);">256 Colors (8 BPP)</div>
<div class="rb d" style="left:581px;top:297px"></div>
<div class="t g" style="left:597px;top:297px;transform:scaleX(0.8562);">16 Colors (4 BPP)</div>
<div class="rb d" style="left:581px;top:316px"></div>
<div class="t g" style="left:597px;top:316px;transform:scaleX(0.8829);">2 Colors (black/white) (1 BPP)</div>
<div class="rb d s" style="left:581px;top:337px"></div>
<div class="t g" style="left:597px;top:337px;transform:scaleX(0.8547);">Custom colors:</div>
<div class="inp d" style="left:674px;top:332px;width:42px;height:20px"></div>
<div class="t g" style="left:677px;top:336px;transform:scaleX(0.88);">0</div>
<div class="t " style="left:719px;top:337px;transform:scaleX(0.88);">(2 - 256)</div>
<div class="cb d" style="left:581px;top:357px"><svg class="chk" viewBox="0 0 9 9"><path d="M1 4.6 L3.4 7.2 L8 1.6" fill="none" stroke="#6d6d6d" stroke-width="1.9"/></svg></div>
<div class="t g" style="left:597px;top:357px;transform:scaleX(0.8605);">Use Floyd-Steinberg dithering</div>
<div class="gb" style="left:572px;top:388px;width:251px;height:302px"></div>
<div class="cb" style="left:581px;top:401px"></div>
<div class="t " style="left:597px;top:401px;transform:scaleX(0.88);">Auto adjust colors</div>
<div class="cb" style="left:581px;top:422px"></div>
<div class="t " style="left:597px;top:422px;transform:scaleX(0.88);">Horizontal flip</div>
<div class="cb" style="left:581px;top:443px"></div>
<div class="t " style="left:597px;top:443px;transform:scaleX(0.88);">Vertical flip</div>
<div class="cb" style="left:581px;top:464px"></div>
<div class="t " style="left:597px;top:464px;transform:scaleX(0.88);">Rotate left</div>
<div class="cb" style="left:581px;top:485px"></div>
<div class="t " style="left:597px;top:486px;transform:scaleX(0.88);">Rotate right</div>
<div class="cb" style="left:581px;top:506px"></div>
<div class="t " style="left:597px;top:507px;transform:scaleX(0.88);">Convert to grayscale</div>
<div class="cb" style="left:581px;top:527px"></div>
<div class="t " style="left:597px;top:528px;transform:scaleX(0.88);">Negative</div>
<div class="cb" style="left:581px;top:549px"></div>
<div class="t " style="left:597px;top:549px;transform:scaleX(0.88);">Auto crop borders</div>
<div class="cb" style="left:581px;top:575px"></div>
<div class="t " style="left:597px;top:575px;transform:scaleX(0.88);">Canvas size</div>
<div class="btn d" style="left:716px;top:572px;width:91px;height:18px;line-height:16px;"><span>Settings</span></div>
<div class="cb" style="left:581px;top:603px"></div>
<div class="t " style="left:597px;top:603px;transform:scaleX(0.88);">Add overlay text</div>
<div class="btn d" style="left:716px;top:600px;width:91px;height:18px;line-height:16px;"><span>Settings</span></div>
<div class="cb" style="left:581px;top:631px"></div>
<div class="t " style="left:597px;top:631px;transform:scaleX(0.88);">Add watermark image</div>
<div class="btn d" style="left:716px;top:628px;width:91px;height:18px;line-height:16px;"><span>Settings</span></div>
<div class="t " style="left:581px;top:652px;transform:scaleX(0.88);">RGB to:</div>
<div class="cb" style="left:581px;top:669px"></div>
<div class="t " style="left:597px;top:669px;transform:scaleX(0.88);">RBG</div>
<div class="cb" style="left:629px;top:669px"></div>
<div class="t " style="left:645px;top:669px;transform:scaleX(0.88);">BGR</div>
<div class="cb" style="left:677px;top:669px"></div>
<div class="t " style="left:693px;top:669px;transform:scaleX(0.88);">BRG</div>
<div class="cb" style="left:725px;top:669px"></div>
<div class="t " style="left:741px;top:669px;transform:scaleX(0.88);">GRB</div>
<div class="cb" style="left:773px;top:669px"></div>
<div class="t " style="left:789px;top:669px;transform:scaleX(0.88);">GBR</div>
<div class="gb" style="left:827px;top:241px;width:251px;height:259px"></div>
<div class="cb" style="left:838px;top:249px"></div>
<div class="t " style="left:854px;top:250px;transform:scaleX(0.87);">Sharpen:</div>
<div class="inp" style="left:949px;top:246px;width:41px;height:20px"></div>
<div class="t " style="left:952px;top:250px;transform:scaleX(0.88);">1</div>
<div class="t " style="left:994px;top:249px;transform:scaleX(0.87);white-space:pre;">(1  -  99)</div>
<div class="cb" style="left:838px;top:272px"></div>
<div class="t " style="left:854px;top:273px;transform:scaleX(0.87);">Brightness:</div>
<div class="inp" style="left:949px;top:269px;width:41px;height:20px"></div>
<div class="t " style="left:994px;top:272px;transform:scaleX(0.87);white-space:pre;">(-255  -  255)</div>
<div class="cb" style="left:838px;top:294px"></div>
<div class="t " style="left:854px;top:295px;transform:scaleX(0.87);">Contrast:</div>
<div class="inp" style="left:949px;top:292px;width:41px;height:20px"></div>
<div class="t " style="left:994px;top:294px;transform:scaleX(0.87);white-space:pre;">(-127  -  127)</div>
<div class="cb" style="left:838px;top:317px"></div>
<div class="t " style="left:854px;top:318px;transform:scaleX(0.87);">Gamma correction:</div>
<div class="inp" style="left:949px;top:315px;width:41px;height:20px"></div>
<div class="t " style="left:994px;top:317px;transform:scaleX(0.87);white-space:pre;">(0.01  -  6.99)</div>
<div class="cb" style="left:838px;top:340px"></div>
<div class="t " style="left:854px;top:341px;transform:scaleX(0.87);">Saturation</div>
<div class="inp" style="left:949px;top:337px;width:41px;height:20px"></div>
<div class="t " style="left:994px;top:340px;transform:scaleX(0.87);white-space:pre;">(-255  -  255)</div>
<div class="cb" style="left:838px;top:363px"></div>
<div class="t " style="left:854px;top:364px;transform:scaleX(0.87);">Color balance - R:</div>
<div class="inp" style="left:949px;top:360px;width:41px;height:20px"></div>
<div class="t " style="left:994px;top:363px;transform:scaleX(0.87);white-space:pre;">(-255  -  255)</div>
<div class="cb" style="left:838px;top:385px"></div>
<div class="t " style="left:854px;top:386px;transform:scaleX(0.87);">Color balance - G:</div>
<div class="inp" style="left:949px;top:383px;width:41px;height:20px"></div>
<div class="t " style="left:994px;top:385px;transform:scaleX(0.87);white-space:pre;">(-255  -  255)</div>
<div class="cb" style="left:838px;top:408px"></div>
<div class="t " style="left:854px;top:409px;transform:scaleX(0.87);">Color balance - B:</div>
<div class="inp" style="left:949px;top:406px;width:41px;height:20px"></div>
<div class="t " style="left:994px;top:408px;transform:scaleX(0.87);white-space:pre;">(-255  -  255)</div>
<div class="cb" style="left:838px;top:431px"></div>
<div class="t " style="left:854px;top:432px;transform:scaleX(0.87);">Blur filter:</div>
<div class="inp" style="left:949px;top:428px;width:41px;height:20px"></div>
<div class="t " style="left:952px;top:432px;transform:scaleX(0.88);">1</div>
<div class="t " style="left:994px;top:433px;transform:scaleX(0.87);white-space:pre;">(1  -  99)</div>
<div class="cb" style="left:838px;top:454px"></div>
<div class="t " style="left:854px;top:455px;transform:scaleX(0.87);">Median filter:</div>
<div class="inp" style="left:949px;top:451px;width:41px;height:20px"></div>
<div class="t " style="left:952px;top:455px;transform:scaleX(0.88);">3</div>
<div class="t " style="left:994px;top:454px;transform:scaleX(0.87);white-space:pre;">(3  -  9)</div>
<div class="cb" style="left:838px;top:476px"></div>
<div class="t " style="left:854px;top:477px;transform:scaleX(0.87);">Fine rotation:</div>
<div class="inp" style="left:949px;top:474px;width:41px;height:20px"></div>
<div class="t " style="left:994px;top:476px;transform:scaleX(0.87);white-space:pre;">(-360.0  -  360.0)</div>
<div class="gb" style="left:827px;top:515px;width:251px;height:146px"></div>
<div class="lg" style="left:834px;top:508px;width:98px"></div>
<div class="t " style="left:836px;top:509px;transform:scaleX(0.8788);">MISCELLANEOUS:</div>
<div class="cb" style="left:838px;top:528px"></div>
<div class="t " style="left:854px;top:529px;transform:scaleX(0.8572);">Overwrite existing files</div>
<div class="cb" style="left:838px;top:550px"></div>
<div class="t " style="left:854px;top:551px;transform:scaleX(0.8727);">Delete original files after conversion</div>
<div class="cb" style="left:838px;top:571px"></div>
<div class="t " style="left:854px;top:572px;transform:scaleX(0.8693);">Create subfolders in destination folder</div>
<div class="cb" style="left:838px;top:592px"></div>
<div class="t " style="left:854px;top:593px;transform:scaleX(0.8803);">Save files with original date/time</div>
<div class="cb" style="left:838px;top:613px"><svg class="chk" viewBox="0 0 9 9"><path d="M1 4.6 L3.4 7.2 L8 1.6" fill="none" stroke="#111" stroke-width="1.9"/></svg></div>
<div class="t " style="left:854px;top:614px;transform:scaleX(0.8899);">Apply changes to all pages (TIF/PDF saving)</div>
<div class="cb" style="left:838px;top:637px"></div>
<div class="t " style="left:854px;top:638px;transform:scaleX(0.86);">Custom processing order</div>
<div class="btn d" style="left:977px;top:635px;width:91px;height:17px;line-height:15px;"><span>Change order</span></div>
<div class="btn def" style="left:846px;top:668px;width:93px;height:21px;line-height:19px;"><span>OK</span></div>
<div class="btn " style="left:963px;top:668px;width:93px;height:21px;line-height:19px;"><span>Cancel</span></div>
</body></html>
